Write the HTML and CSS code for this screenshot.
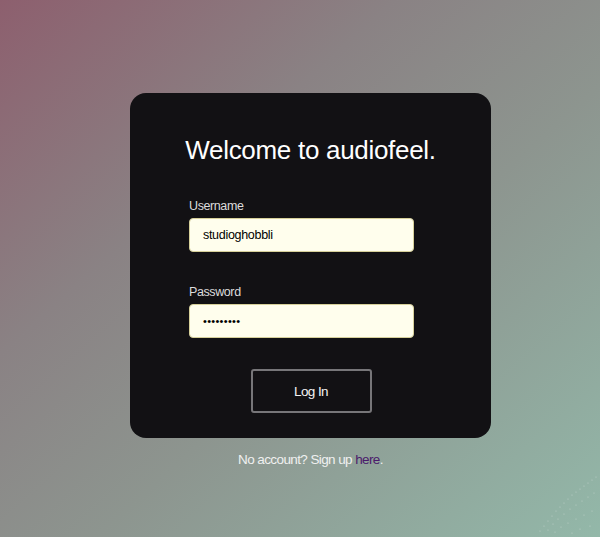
FILE: index.html
```html
<!DOCTYPE html>
<html lang="en">
<head>
<meta charset="utf-8">
<title>audiofeel</title>
<link rel="stylesheet" href="styles.css">
</head>
<body>
<main class="page">
  <section class="card">
    <h1 class="title">Welcome to audiofeel.</h1>
    <form class="form">
      <label class="label" for="u">Username</label>
      <div class="input" id="u">studioghobbli</div>
      <label class="label label-2" for="p">Password</label>
      <div class="input input-pw" id="p">•••••••••</div>
      <div class="actions"><button type="button" class="btn">Log In</button></div>
    </form>
  </section>
  <p class="footer">No account? Sign up <a class="link" href="#">here</a>.</p>
</main>
<svg class="dots" width="110" height="110" viewBox="0 0 110 110" aria-hidden="true">
  <g fill="#dfe8e3" opacity="0.55">
    <circle cx="106" cy="50" r="0.6"/><circle cx="102" cy="53" r="0.6"/><circle cx="98" cy="56" r="0.6"/>
    <circle cx="94" cy="59" r="0.6"/><circle cx="90" cy="62" r="0.6"/><circle cx="86" cy="65" r="0.6"/>
    <circle cx="82" cy="68" r="0.6"/><circle cx="78" cy="72" r="0.6"/><circle cx="74" cy="76" r="0.6"/>
    <circle cx="70" cy="80" r="0.6"/><circle cx="66" cy="84" r="0.6"/><circle cx="62" cy="89" r="0.6"/>
    <circle cx="58" cy="94" r="0.6"/><circle cx="54" cy="99" r="0.6"/><circle cx="50" cy="104" r="0.6"/>
    <circle cx="104" cy="66" r="0.6"/><circle cx="98" cy="70" r="0.6"/><circle cx="92" cy="74" r="0.6"/>
    <circle cx="86" cy="78" r="0.6"/><circle cx="80" cy="82" r="0.6"/><circle cx="74" cy="87" r="0.6"/>
    <circle cx="68" cy="92" r="0.6"/><circle cx="63" cy="97" r="0.6"/><circle cx="58" cy="103" r="0.6"/>
    <circle cx="102" cy="84" r="0.6"/><circle cx="94" cy="88" r="0.6"/><circle cx="86" cy="92" r="0.6"/>
    <circle cx="78" cy="96" r="0.6"/><circle cx="71" cy="100" r="0.6"/><circle cx="65" cy="105" r="0.6"/>
    <circle cx="100" cy="99" r="0.6"/><circle cx="90" cy="102" r="0.6"/><circle cx="82" cy="106" r="0.6"/>
  </g>
</svg>
</body>
</html>
```
FILE: styles.css
```css
html, body {
  margin: 0;
  padding: 0;
  height: 100%;
}
body {
  position: relative;
  background: linear-gradient(to bottom right, #8d5f6e 0%, #8a8284 33%, #8d958f 58%, #93b8a9 100%);
  font-family: "Liberation Sans", Arial, sans-serif;
  overflow: hidden;
}
.page {
  width: 361px;
  margin-left: 130px;
  padding-top: 93px;
}
.card {
  background: #121114;
  border-radius: 16px;
  padding: 42px 59px 0 59px;
  height: 345px;
  box-sizing: border-box;
}
.title {
  margin: 0 -59px;
  text-align: center;
  font-size: 26px;
  line-height: 30px;
  font-weight: normal;
  letter-spacing: -0.3px;
  color: #ffffff;
}
.form {
  display: flex;
  flex-direction: column;
  margin-top: 33px;
}
.label {
  font-size: 12.5px;
  line-height: 16px;
  letter-spacing: -0.4px;
  color: #dcdcdc;
  margin-bottom: 4px;
}
.label-2 {
  margin-top: 32px;
}
.input {
  width: 225px;
  height: 34px;
  box-sizing: border-box;
  background: #fffeed;
  border: 1px solid #d6d09a;
  border-radius: 4px;
  padding-left: 13px;
  font-size: 12.5px;
  line-height: 32px;
  letter-spacing: -0.3px;
  color: #000;
}
.input-pw {
  font-size: 11px;
  letter-spacing: 0.3px;
}
.actions {
  display: flex;
  justify-content: center;
  margin: 31px -59px 0 -59px;
}
.btn {
  width: 121px;
  height: 44px;
  margin-left: 1px;
  background: transparent;
  border: 2px solid #777679;
  border-radius: 3px;
  color: #f2f2f2;
  font-family: "Liberation Sans", Arial, sans-serif;
  font-size: 13.5px;
  letter-spacing: -0.6px;
}
.footer {
  margin: 13px 0 0;
  text-align: center;
  font-size: 13.5px;
  line-height: 17px;
  letter-spacing: -0.6px;
  color: #f0f0f0;
}
.link {
  color: #4b1a6b;
  text-decoration: none;
}
.dots {
  position: absolute;
  right: 0;
  bottom: 0;
}
```
